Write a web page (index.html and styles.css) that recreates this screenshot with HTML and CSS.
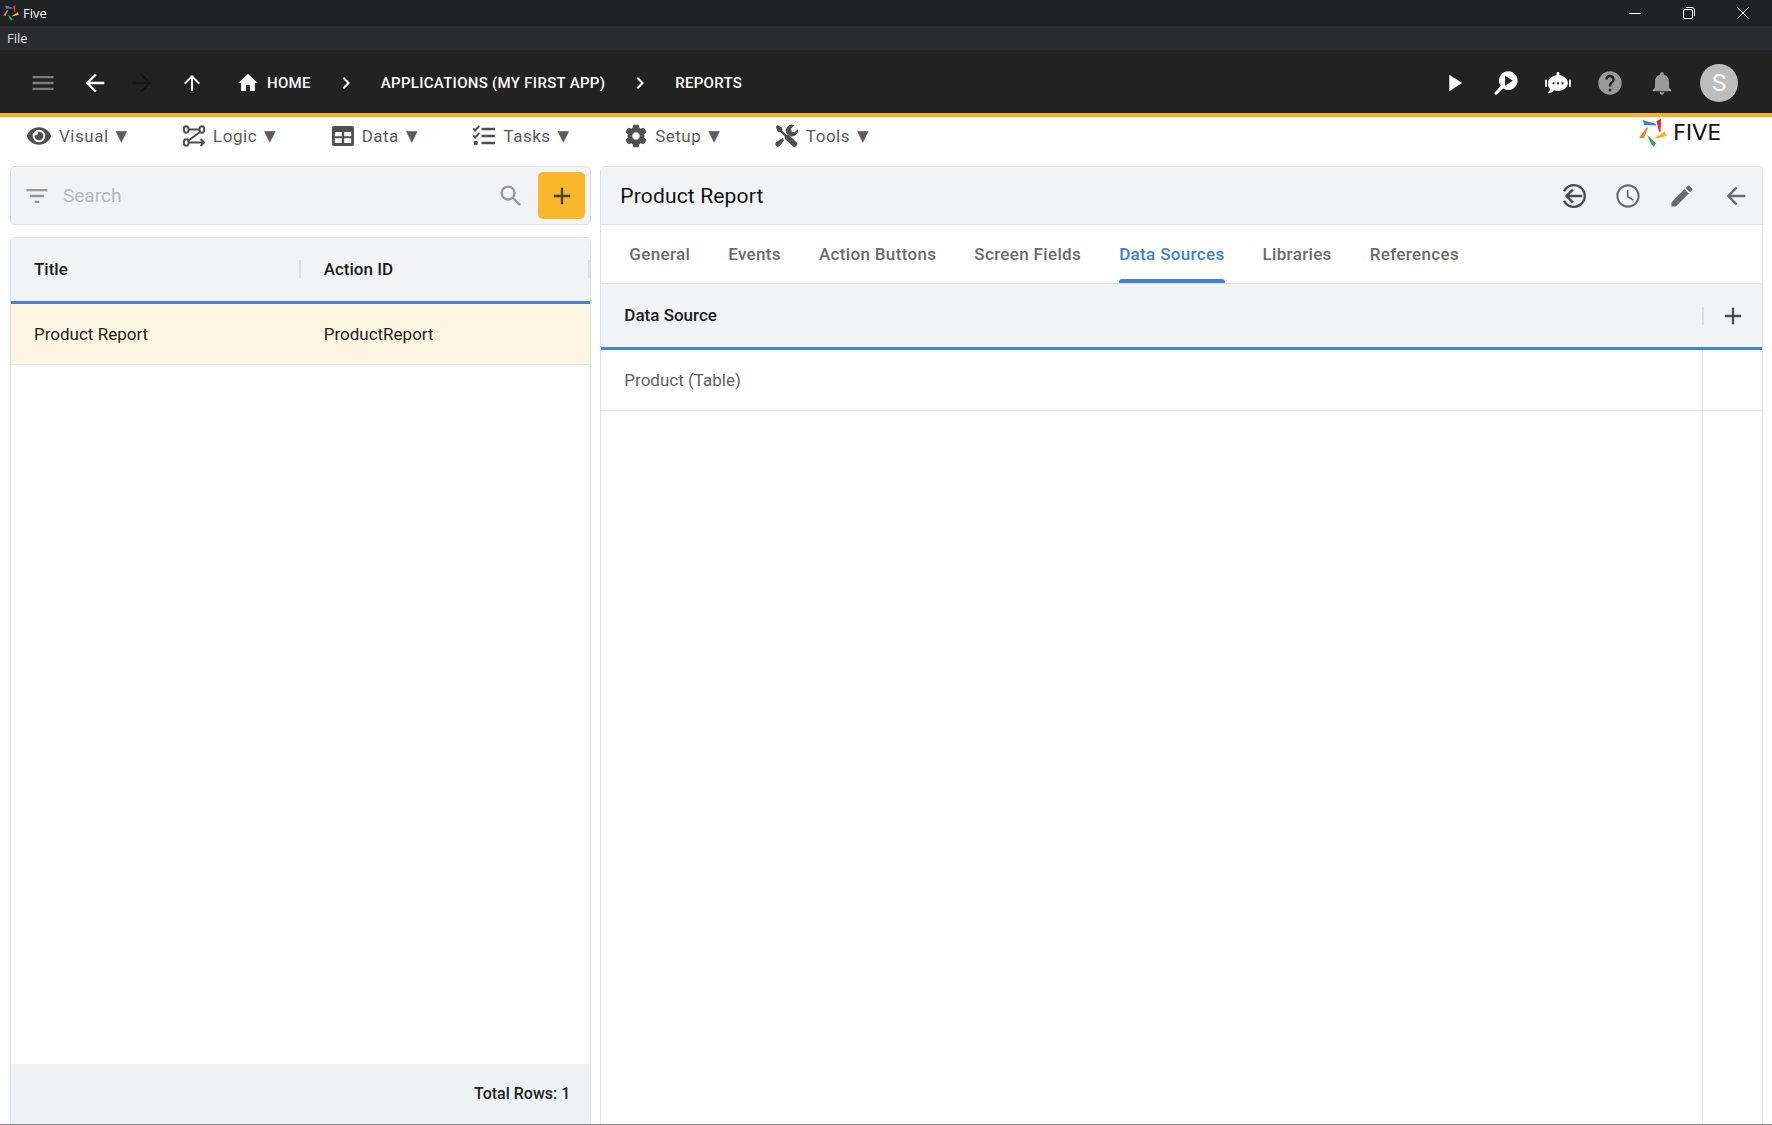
FILE: index.html
```html
<!DOCTYPE html>
<html lang="en">
<head>
<meta charset="utf-8">
<title>Five</title>
<link rel="stylesheet" href="styles.css">
</head>
<body>
<svg class="defs" aria-hidden="true">
  <symbol id="mark" viewBox="0 0 28 28">
    <path fill="#3b82dc" d="M4 1l13 4v1.500L5 6z"/>
    <path fill="#e3262b" d="M17.500 2L22 0l-.5 13-1.500-.5z"/>
    <path fill="#fbb321" d="M25.500 12.500L28 17l-12 3 .5-1.500z"/>
    <path fill="#34a556" d="M8 16l9 8-2 4-2.500-2.500z"/>
    <path fill="#f58025" d="M8 8l1 1-4 10H0z"/>
  </symbol>
  <symbol id="menu" viewBox="0 0 24 24"><path d="M3 18h18v-2H3v2zm0-5h18v-2H3v2zm0-7v2h18V6H3z"/></symbol>
  <symbol id="left" viewBox="0 0 24 24"><path d="M20 11H7.83l5.59-5.59L12 4l-8 8 8 8 1.410-1.410L7.830 13H20v-2z"/></symbol>
  <symbol id="right" viewBox="0 0 24 24"><path d="M12 4l-1.410 1.410L16.170 11H4v2h12.170l-5.580 5.590L12 20l8-8z"/></symbol>
  <symbol id="up" viewBox="0 0 24 24"><path d="M4 12l1.410 1.410L11 7.830V20h2V7.830l5.580 5.590L20 12l-8-8-8 8z"/></symbol>
  <symbol id="home" viewBox="0 0 24 24"><path d="M10 20v-6h4v6h5v-8h3L12 3 2 12h3v8z"/></symbol>
  <symbol id="chevron" viewBox="0 0 24 24"><path d="M10 6L8.590 7.410 13.170 12l-4.580 4.590L10 18l6-6z"/></symbol>
  <symbol id="add" viewBox="0 0 24 24"><path d="M19 13h-6v6h-2v-6H5v-2h6V5h2v6h6v2z"/></symbol>
</svg>

<div class="titlebar">
  <svg class="titlebar-mark"><use href="#mark"/></svg>
  <span>Five</span>
  <div class="window-buttons">
    <button aria-label="Minimize"><svg viewBox="0 0 12 12"><path d="M0 6.500h12"/></svg></button>
    <button aria-label="Restore"><svg viewBox="0 0 12 12"><rect x=".5" y="2.500" width="9" height="9" rx="1.500"/><path d="M3 .5h6a2.500 2.500 0 0 1 2.500 2.500v6"/></svg></button>
    <button aria-label="Close"><svg viewBox="0 0 12 12"><path d="M.5.5l11 11M11.500.5l-11 11"/></svg></button>
  </div>
</div>
<div class="filebar"><button>File</button></div>

<header class="appbar">
  <div class="history">
    <button class="dim" aria-label="Menu"><svg class="i28"><use href="#menu"/></svg></button>
    <div class="steps">
      <button aria-label="Back"><svg class="i28"><use href="#left"/></svg></button>
      <button class="off" aria-label="Forward"><svg class="i28"><use href="#right"/></svg></button>
    </div>
    <button aria-label="Up"><svg class="i24"><use href="#up"/></svg></button>
  </div>
  <nav class="crumbs" aria-label="Breadcrumb">
    <a href="#home"><svg class="i24"><use href="#home"/></svg>HOME</a>
    <svg class="i24"><use href="#chevron"/></svg>
    <a href="#app">APPLICATIONS (MY FIRST APP)</a>
    <svg class="i24"><use href="#chevron"/></svg>
    <a href="#reports">REPORTS</a>
  </nav>
  <div class="tools">
    <button aria-label="Run"><svg class="i28" viewBox="0 0 24 24"><path d="M8 5v14l11-7z"/></svg></button>
    <button aria-label="Inspect"><svg class="i28" viewBox="0 0 24 24"><path fill-rule="evenodd" d="M14 2a8 8 0 1 1-4.400 14.700L4.500 21.700a1.200 1.200 0 0 1-1.900-1.900L7.400 14.500A8 8 0 0 1 14 2zM11.200 5.800v8.600l6.600-4.300z"/></svg></button>
    <button aria-label="Assistant"><svg class="i28" viewBox="0 0 24 24"><path fill-rule="evenodd" d="M12 2.500a1.200 1.200 0 0 1 1.200 1.200v1.700c4.200.5 7.300 3.300 7.300 6.600 0 3.800-3.800 6.700-8.500 6.700-1.200 0-2.300-.2-3.300-.5-1.400 1.600-3.200 2.500-5.400 2.600 1-1 1.700-2.100 1.900-3.400A6.200 6.200 0 0 1 3.500 12c0-3.300 3.100-6.100 7.300-6.600V3.700A1.200 1.200 0 0 1 12 2.500zM7.400 11.300v1.700h1.700v-1.700zm3.800 0v1.700h1.700v-1.700zm3.800 0v1.700h1.700v-1.700z"/><rect x="1" y="9" width="1.500" height="6.500" rx=".7"/><rect x="21.500" y="9" width="1.500" height="6.500" rx=".7"/></svg></button>
    <button class="grey" aria-label="Help"><svg class="i28" viewBox="0 0 24 24"><path d="M12 2C6.480 2 2 6.480 2 12s4.480 10 10 10 10-4.480 10-10S17.520 2 12 2zm1 17h-2v-2h2v2zm2.070-7.750l-.9.920C13.450 12.900 13 13.500 13 15h-2v-.5c0-1.100.45-2.100 1.170-2.830l1.240-1.260c.37-.36.59-.86.59-1.410 0-1.100-.9-2-2-2s-2 .9-2 2H8c0-2.210 1.790-4 4-4s4 1.790 4 4c0 .88-.36 1.680-.93 2.250z"/></svg></button>
    <button class="grey" aria-label="Notifications"><svg class="i28" viewBox="0 0 24 24"><path d="M12 22c1.100 0 2-.9 2-2h-4c0 1.100.89 2 2 2zm6-6v-5c0-3.070-1.640-5.640-4.500-6.320V4c0-.83-.67-1.500-1.500-1.500s-1.500.67-1.500 1.500v.68C7.630 5.360 6 7.920 6 11v5l-2 2v1h16v-1l-2-2z"/></svg></button>
    <button class="avatar">S</button>
  </div>
</header>

<div class="menubar">
  <button><svg class="i26" viewBox="0 0 24 24"><path fill-rule="evenodd" d="M12 4C6.500 4 2.500 7.500.6 12c1.900 4.500 5.900 8 11.400 8s9.500-3.500 11.400-8C21.500 7.500 17.500 4 12 4zm0 2.200a5.800 5.800 0 1 1 0 11.600 5.800 5.800 0 0 1 0-11.600z"/><path d="M12 8a4 4 0 1 1-3.900 3.100 2.300 2.300 0 0 0 3-3z"/></svg>Visual <i>▼</i></button>
  <button><svg class="i24 line" viewBox="0 0 24 24"><ellipse cx="4.200" cy="5.500" rx="2.400" ry="3.200"/><ellipse cx="19.800" cy="5.500" rx="2.400" ry="3.200"/><ellipse cx="4.200" cy="18.500" rx="2.400" ry="3.200"/><path d="M7 5.500h10M18 8L6.500 16.500M7 18.500h15M18.500 15l3.500 3.500-3.500 3.500"/></svg>Logic <i>▼</i></button>
  <button><svg class="i24" viewBox="0 0 24 24"><path fill-rule="evenodd" d="M3 2h18a2 2 0 0 1 2 2v16a2 2 0 0 1-2 2H3a2 2 0 0 1-2-2V4a2 2 0 0 1 2-2zM3.800 8v4.300h7V8zm9.400 0v4.300h7V8zm-9.400 6.300V19h7v-4.700zm9.400 0V19h7v-4.700z"/></svg>Data <i>▼</i></button>
  <button><svg class="i24 line" viewBox="0 0 24 24"><path stroke-width="2.500" d="M9.500 5H23M9.500 12H23M9.500 19H23"/><path d="M1.200 4.500l2 2 4-4.500M1.200 11.500l2 2 4-4.500"/><circle class="dot" cx="3.800" cy="19" r="2.200"/></svg>Tasks <i>▼</i></button>
  <button><svg class="i24" viewBox="0 0 24 24"><path fill-rule="evenodd" stroke="currentColor" stroke-linejoin="round" d="M9.800 1.200h4.400l.7 3 1.800 1 3-1 2.400 4-2.300 2.100v3.400l2.300 2.100-2.400 4-3-1-1.800 1-.7 3H9.800l-.7-3-1.800-1-3 1-2.400-4 2.300-2.100v-3.400L1.900 8.200l2.400-4 3 1 1.800-1zM12 7.800a4.200 4.200 0 1 0 0 8.400 4.200 4.200 0 0 0 0-8.400z"/></svg>Setup <i>▼</i></button>
  <button><svg class="i24" viewBox="0 0 24 24"><path d="M2.500 1l4.700 3v2.600l4.100 4.200c1-.4 2.200-.2 3 .6l7.500 7c.9.9.9 1.900.2 2.600l-1.500 1.500c-.7.700-1.700.7-2.500-.1l-7.600-7c-.8-.8-1-2-.6-3L5.500 8.200H3L.8 3z"/><path d="M23 5.200a6.200 6.200 0 0 1-7.800 7l-1.600-1.400a4 4 0 0 0-1.500-.5 6 6 0 0 1 7.400-9L16 4.700l.6 3 3 .6zM8.200 13.500c-.1 1 .2 2.100.8 2.900l-4 5.400a2.600 2.600 0 0 1-3.800-3.600z"/></svg>Tools <i>▼</i></button>
  <a class="brand" href="#five" aria-label="Five"><svg class="brand-mark"><use href="#mark"/></svg>FIVE</a>
</div>

<main class="workspace">
  <section class="list">
    <form class="search panel">
      <svg class="i28" viewBox="0 0 24 24"><path d="M10 18h4v-2h-4v2zM3 6v2h18V6H3zm3 7h12v-2H6v2z"/></svg>
      <input type="search" placeholder="Search" aria-label="Search">
      <button type="submit" aria-label="Find"><svg class="i28" viewBox="0 0 24 24"><path d="M15.500 14h-.79l-.28-.27C15.410 12.590 16 11.110 16 9.500 16 5.910 13.090 3 9.500 3S3 5.910 3 9.500 5.910 16 9.500 16c1.610 0 3.090-.59 4.230-1.570l.27.28v.79l5 4.990L20.490 19l-4.990-5zm-6 0C7.010 14 5 11.990 5 9.500S7.010 5 9.500 5 14 7.010 14 9.500 11.990 14 9.500 14z"/></svg></button>
      <button type="button" class="add" aria-label="Add"><svg class="i28"><use href="#add"/></svg></button>
    </form>
    <div class="grid panel">
      <table>
        <thead><tr><th><span>Title</span></th><th><span>Action ID</span></th></tr></thead>
        <tbody><tr class="selected"><td>Product Report</td><td>ProductReport</td></tr></tbody>
      </table>
      <div class="total">Total Rows: 1</div>
    </div>
  </section>

  <section class="detail panel">
    <div class="detail-head">
      <h1>Product Report</h1>
      <button class="dark" aria-label="Revert"><svg class="i28 line" viewBox="0 0 24 24"><path d="M3.500 8A9.300 9.300 0 1 1 3.500 16M19 12H6M11 6.500L5.500 12l5.500 5.500"/></svg></button>
      <button aria-label="History"><svg class="i28" viewBox="0 0 24 24"><path d="M11.990 2C6.470 2 2 6.480 2 12s4.470 10 9.990 10C17.520 22 22 17.520 22 12S17.520 2 11.990 2zM12 20.200c-4.500 0-8.200-3.700-8.200-8.200S7.500 3.800 12 3.800s8.200 3.700 8.200 8.200-3.700 8.200-8.200 8.200zM12.500 7H11v6l5.250 3.150.75-1.230-4.500-2.670z"/></svg></button>
      <button aria-label="Edit"><svg class="i28" viewBox="0 0 24 24"><path d="M3 17.250V21h3.750L17.810 9.940l-3.750-3.750L3 17.250zM20.710 7.040c.39-.39.39-1.020 0-1.410l-2.340-2.340c-.39-.39-1.020-.39-1.410 0l-1.830 1.830 3.750 3.750 1.830-1.830z"/></svg></button>
      <button aria-label="Close record"><svg class="i28"><use href="#left"/></svg></button>
    </div>
    <nav class="tabs">
      <a href="#general">General</a>
      <a href="#events">Events</a>
      <a href="#buttons">Action Buttons</a>
      <a href="#fields">Screen Fields</a>
      <a href="#sources" class="active" aria-current="page">Data Sources</a>
      <a href="#libraries">Libraries</a>
      <a href="#references">References</a>
    </nav>
    <table class="sources">
      <thead><tr><th>Data Source</th><th class="action"><button aria-label="Add data source"><svg class="i28"><use href="#add"/></svg></button></th></tr></thead>
      <tbody><tr><td>Product (Table)</td><td class="action"></td></tr></tbody>
    </table>
    <div class="filler"><div></div></div>
  </section>
</main>
</body>
</html>
```

FILE: styles.css
```css
* { box-sizing: border-box; }

body {
  margin: 0;
  min-height: 100vh;
  display: flex;
  flex-direction: column;
  border-bottom: 1px solid #86838c;
  background: #fff;
  font-family: Roboto, "Liberation Sans", sans-serif;
  font-size: 17px;
  color: #212121;
}

.defs { display: none; }

button {
  display: flex;
  align-items: center;
  justify-content: center;
  padding: 0;
  border: 0;
  background: none;
  font: inherit;
  letter-spacing: inherit;
  color: inherit;
  cursor: pointer;
}

a { color: inherit; text-decoration: none; }
svg { fill: currentColor; flex: none; display: block; }
.i24 { width: 24px; height: 24px; }
.i26 { width: 26px; height: 26px; }
.i28 { width: 28px; height: 28px; }
.line { fill: none; stroke: currentColor; stroke-width: 2; }
.line .dot { fill: currentColor; stroke: none; }

/* Window chrome */
.titlebar {
  display: flex;
  align-items: center;
  gap: 4px;
  height: 26px;
  padding: 0 2px 0 3px;
  background: #1e2224;
  color: #fff;
  font: 13px/26px "Open Sans", sans-serif;
}
.titlebar-mark { width: 16px; height: 16px; }
.window-buttons { display: flex; margin-left: auto; }
.window-buttons button { width: 54px; height: 26px; }
.window-buttons svg { width: 12px; height: 12px; fill: none; stroke: #fff; }
.filebar {
  display: flex;
  height: 24px;
  padding-left: 7px;
  background: #2a2b2e;
  color: #e4e4e4;
  font: 13px/24px "Open Sans", sans-serif;
}

/* Application bar */
.appbar {
  display: flex;
  align-items: center;
  gap: 32px;
  height: 67px;
  padding: 3px 34px 0 29px;
  border-bottom: 4px solid #fbb324;
  background: #222;
  color: #fff;
}
.history { display: flex; align-items: center; gap: 24px; }
.steps { display: flex; gap: 19px; }
.dim { color: #7c7c7c; }
.off { color: #161616; }
.crumbs {
  display: flex;
  align-items: center;
  gap: 23px;
  font-size: 15px;
  font-weight: 500;
  letter-spacing: 0.02em;
}
.crumbs a { display: flex; align-items: center; gap: 7px; }
.tools { display: flex; align-items: center; gap: 24px; margin-left: auto; }
.grey { color: #999; }
.avatar {
  width: 38px;
  height: 38px;
  border-radius: 50%;
  background: #bdbdbd;
  font-size: 24px;
}

/* Section menus */
.menubar {
  display: flex;
  align-items: center;
  gap: 55px;
  height: 39px;
  padding: 0 30px 2px 26px;
  color: #5c5c5c;
  letter-spacing: 0.03em;
}
.menubar button { gap: 7px; }
.menubar svg { color: #4f4f4f; }
.menubar i { font: 15px/16px "DejaVu Sans", sans-serif; letter-spacing: normal; }
.brand {
  display: flex;
  align-items: center;
  gap: 6px;
  width: 103px;
  margin: 0 0 6px auto;
  color: #111;
  font: 22px/24px "DejaVu Sans", sans-serif;
  letter-spacing: normal;
}
.menubar .brand-mark { width: 28px; height: 28px; }

/* Workspace */
.workspace {
  flex: 1;
  display: grid;
  grid-template-columns: 1fr 2fr;
  gap: 9px;
  padding: 10px 9px 0 10px;
}
.panel { border: 1px solid #dfe1e3; border-radius: 5px; }
.list { display: flex; flex-direction: column; gap: 12px; min-width: 0; }
.search {
  display: flex;
  align-items: center;
  height: 59px;
  padding: 0 5px 0 12px;
  background: #f1f3f5;
  color: #909a9f;
}
.search input {
  flex: 1;
  min-width: 0;
  margin-left: 12px;
  padding: 0;
  border: 0;
  outline: 0;
  background: none;
  font: 19px/24px Roboto, sans-serif;
  color: #212121;
}
.search input::placeholder { color: #b6babd; }
.search .add {
  width: 47px;
  height: 47px;
  margin-left: 13px;
  border-radius: 5px;
  background: #f8b82a;
  color: #424242;
}

.grid,
.detail {
  display: flex;
  flex-direction: column;
  min-width: 0;
  overflow: hidden;
  border-bottom: 0;
  border-radius: 5px 5px 0 0;
}
.grid { flex: 1; }
table { width: 100%; border-collapse: separate; border-spacing: 0; table-layout: fixed; }
th, td { height: 61px; padding: 0 0 0 23px; text-align: left; }
th {
  height: 66px;
  padding-bottom: 2px;
  border-bottom: 3px solid #4084d9;
  background: #f1f3f5;
  font-weight: 500;
  color: #1b1b1b;
}
th span { display: block; line-height: 18px; border-right: 2px solid #dcdee0; }
td { border-bottom: 1px solid #e6e7e8; }
.selected td { background: #fef5e2; }
.total {
  margin-top: auto;
  height: 60px;
  padding-right: 20px;
  background: #eef2f3;
  font-size: 16px;
  font-weight: 500;
  line-height: 60px;
  text-align: right;
}

/* Record detail */
.detail-head {
  display: flex;
  align-items: center;
  gap: 26px;
  height: 58px;
  padding: 0 12px 0 19px;
  border-bottom: 1px solid #dfe1e3;
  background: #f1f3f5;
  color: #6a6a6a;
}
.dark { color: #4a4a4a; }
h1 {
  margin: 0 auto 0 0;
  font-size: 21px;
  font-weight: 400;
  letter-spacing: 0.0075em;
  color: #111;
}
.tabs {
  display: flex;
  gap: 38px;
  height: 59px;
  padding: 0 28px;
  border-bottom: 1px solid #dfe1e3;
  font-weight: 500;
  line-height: 59px;
  letter-spacing: 0.02em;
  color: #6b6b6b;
}
.tabs .active { position: relative; color: #3f80da; }
.tabs .active::after {
  content: "";
  position: absolute;
  inset: auto 0 0;
  height: 4px;
  border-radius: 3px 3px 0 0;
  background: #4084d9;
}
.sources td { color: #616161; }
.sources .action { width: 60px; padding: 0; }
.sources td.action { border-left: 1px solid #e6e7e8; }
.action button {
  width: 100%;
  height: 18px;
  border-left: 2px solid #dcdee0;
  color: #4a4a4a;
}
.filler { flex: 1; display: flex; justify-content: flex-end; }
.filler div { width: 60px; border-left: 1px solid #e6e7e8; }
```
